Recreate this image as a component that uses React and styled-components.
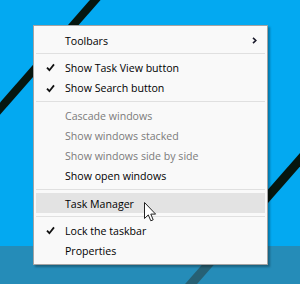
import React from "react";
import styled, { createGlobalStyle } from "styled-components";

const GlobalStyle = createGlobalStyle`
  html, body {
    margin: 0;
    padding: 0;
    background: #00a8f0;
  }
`;

const Desktop = styled.div`
  position: relative;
  width: 300px;
  height: 284px;
  overflow: hidden;
  display: flex;
  flex-direction: column;
  background: #03a9f1;
  font-family: "Open Sans", "Noto Sans", sans-serif;
`;

const Wallpaper = styled.svg`
  position: absolute;
  left: 0;
  top: 0;
`;

const Spacer = styled.div`
  flex: 1;
`;

const Taskbar = styled.div`
  position: relative;
  height: 38px;
  background: rgba(52, 128, 160, 0.7);
`;

const Menu = styled.div`
  position: absolute;
  left: 33px;
  top: 25px;
  width: 229px;
  padding: 4px 2px 3px;
  background: #f9f9f9;
  border: 1px solid #a3a3a3;
  box-shadow: 2px 2px 2px rgba(0, 0, 0, 0.3);
  z-index: 2;
`;

const Item = styled.div`
  display: flex;
  align-items: center;
  height: 20.3px;
  padding: 0 8px 0 29px;
  position: relative;
  font-size: 10.6px;
  color: ${(p) => (p.disabled ? "#7b7b7b" : "#000")};
  background: ${(p) => (p.active ? "#e3e3e3" : "transparent")};
`;

const Label = styled.span`
  flex: 1;
  white-space: nowrap;
  padding-top: 1px;
`;

const Check = styled.svg`
  position: absolute;
  left: 10px;
  top: 6px;
`;

const Separator = styled.div`
  height: 1px;
  margin: 3px 0;
  background: #e0e0e0;
`;

const Cursor = styled.svg`
  position: absolute;
  left: 144px;
  top: 202px;
  z-index: 3;
`;

const CheckMark = () => (
  <Check width="9" height="9" viewBox="0 0 9 9">
    <path d="M1 4.6 L3.4 7.2 L8 1.4" fill="none" stroke="#111" strokeWidth="1.8" />
  </Check>
);

const Chevron = () => (
  <svg width="5" height="7" viewBox="0 0 5 7">
    <path d="M1 0.8 L3.8 3.5 L1 6.2" fill="none" stroke="#1a1a2a" strokeWidth="1.6" />
  </svg>
);

const MenuItem = ({ children, checked, disabled, active, submenu }) => (
  <Item disabled={disabled} active={active}>
    {checked && <CheckMark />}
    <Label>{children}</Label>
    {submenu && <Chevron />}
  </Item>
);

export default function App() {
  return (
    <>
      <GlobalStyle />
      <Desktop>
        <Wallpaper width="300" height="284" viewBox="0 0 300 284">
          <line x1="104" y1="-10" x2="-10" y2="120" stroke="#06160f" strokeWidth="8" />
          <line x1="320" y1="137" x2="170" y2="308" stroke="#06160f" strokeWidth="9" />
        </Wallpaper>
        <Spacer />
        <Taskbar />
        <Menu>
          <MenuItem submenu>Toolbars</MenuItem>
          <Separator />
          <MenuItem checked>Show Task View button</MenuItem>
          <MenuItem checked>Show Search button</MenuItem>
          <Separator />
          <MenuItem disabled>Cascade windows</MenuItem>
          <MenuItem disabled>Show windows stacked</MenuItem>
          <MenuItem disabled>Show windows side by side</MenuItem>
          <MenuItem>Show open windows</MenuItem>
          <Separator />
          <MenuItem active>Task Manager</MenuItem>
          <Separator />
          <MenuItem checked>Lock the taskbar</MenuItem>
          <MenuItem>Properties</MenuItem>
        </Menu>
        <Cursor width="13" height="21" viewBox="0 0 13 21">
          <path
            d="M0.5 0.5 L0.5 16.5 L4.3 12.9 L6.8 18.8 L9.2 17.8 L6.8 12.1 L11.6 12.1 Z"
            fill="#fff"
            stroke="#222"
            strokeWidth="1"
            strokeLinejoin="round"
          />
        </Cursor>
      </Desktop>
    </>
  );
}
